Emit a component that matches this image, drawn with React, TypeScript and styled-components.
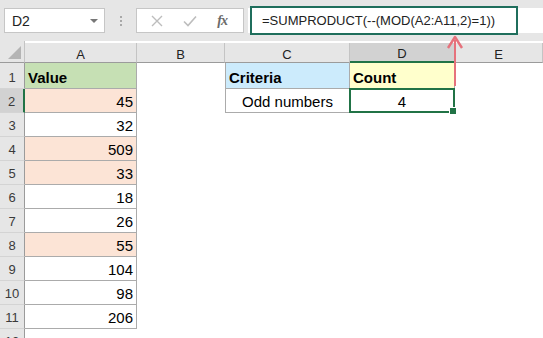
import React from 'react';
import styled, { createGlobalStyle, css } from 'styled-components';

const GlobalStyle = createGlobalStyle`
  html, body {
    margin: 0;
    padding: 0;
    background: #ffffff;
    font-family: 'Liberation Sans', Arial, sans-serif;
  }
`;

const GREEN = '#217346';
const TEAL = '#1f6e5c';
const GRID = '#ababab';
const HEADER_BG = '#e6e6e6';
const HEADER_SEL = '#d2d2d2';

const columns = ['A', 'B', 'C', 'D', 'E'];
const values = [45, 32, 509, 33, 18, 26, 55, 104, 98, 206];

const Page = styled.div`
  position: relative;
  width: 543px;
  height: 338px;
  overflow: hidden;
`;

const FormulaBar = styled.div`
  display: flex;
  align-items: center;
  height: 41px;
  padding-left: 4px;
  background: ${HEADER_BG};
  box-sizing: border-box;
`;

const NameBox = styled.div`
  display: flex;
  align-items: center;
  justify-content: space-between;
  width: 101px;
  height: 25px;
  box-sizing: border-box;
  padding: 0 6px 0 7px;
  background: #fff;
  border: 1px solid #c6c6c6;
  font-size: 14px;
  color: #222;
`;

const Caret = styled.span`
  width: 0;
  height: 0;
  border-left: 4px solid transparent;
  border-right: 4px solid transparent;
  border-top: 4px solid #777;
`;

const Grip = styled.div`
  display: flex;
  flex-direction: column;
  gap: 2px;
  width: 31px;
  align-items: center;
  span {
    width: 2px;
    height: 2px;
    background: #a8a8a8;
  }
`;

const FnButtons = styled.div`
  display: flex;
  align-items: center;
  justify-content: space-around;
  width: 108px;
  height: 25px;
  box-sizing: border-box;
  padding: 0 6px 0 4px;
  background: #fff;
  border: 1px solid #c6c6c6;
`;

const Fx = styled.span`
  font-family: 'Liberation Serif', 'Times New Roman', serif;
  font-style: italic;
  font-weight: bold;
  font-size: 14px;
  color: #6b6b6b;
  letter-spacing: -1px;
`;

const FormulaArea = styled.div`
  flex: 1;
  display: flex;
  align-items: center;
  height: 25px;
  margin-left: 4px;
  background: #fff;
`;

const FormulaBox = styled.div`
  display: flex;
  align-items: center;
  width: 268px;
  height: 29px;
  box-sizing: border-box;
  margin-left: 2px;
  padding-left: 10px;
  border: 2px solid ${TEAL};
  font-size: 13px;
  color: #222;
  white-space: nowrap;
`;

const Sheet = styled.div`
  display: grid;
  grid-template-columns: 25px 112px 88px 125px 105px 1fr;
  grid-template-rows: 22px 26px repeat(11, 24px);
`;

const Corner = styled.div`
  position: relative;
  background: ${HEADER_BG};
  border-right: 1px solid #c4c4c4;
  border-bottom: 1px solid #9b9b9b;
  &::after {
    content: '';
    position: absolute;
    right: 3px;
    bottom: 3px;
    width: 0;
    height: 0;
    border-left: 13px solid transparent;
    border-bottom: 13px solid #b4b4b4;
  }
`;

const ColHead = styled.div<{ $selected?: boolean }>`
  display: flex;
  align-items: center;
  justify-content: center;
  margin-top: 2px;
  padding-top: 3px;
  box-sizing: border-box;
  font-size: 13px;
  color: #222;
  background: ${p => (p.$selected ? HEADER_SEL : HEADER_BG)};
  border-right: 1px solid #c4c4c4;
  border-bottom: ${p => (p.$selected ? `2px solid ${GREEN}` : '1px solid #9b9b9b')};
`;

const RowHead = styled.div<{ $selected?: boolean }>`
  display: flex;
  align-items: flex-end;
  justify-content: center;
  padding-bottom: 3px;
  box-sizing: border-box;
  font-size: 13px;
  color: #3a3a3a;
  background: ${p => (p.$selected ? HEADER_SEL : HEADER_BG)};
  border-bottom: 1px solid #d4d4d4;
  border-right: ${p => (p.$selected ? `2px solid ${GREEN}` : '1px solid #9b9b9b')};
`;

type Align = 'left' | 'right' | 'center';

const Cell = styled.div<{
  $fill?: string;
  $align?: Align;
  $bold?: boolean;
  $boxed?: boolean;
  $leftEdge?: boolean;
  $active?: boolean;
}>`
  position: relative;
  display: flex;
  align-items: flex-end;
  justify-content: ${p =>
    p.$align === 'right' ? 'flex-end' : p.$align === 'center' ? 'center' : 'flex-start'};
  padding: 0 3px 2px 3px;
  box-sizing: border-box;
  font-size: 15px;
  color: #000;
  font-weight: ${p => (p.$bold ? 'bold' : 'normal')};
  background: ${p => p.$fill ?? '#fff'};
  white-space: nowrap;
  ${p =>
    p.$boxed &&
    css`
      border-right: 1px solid ${GRID};
      border-bottom: 1px solid ${GRID};
    `}
  ${p =>
    p.$leftEdge &&
    css`
      border-left: 1px solid ${GRID};
    `}
  ${p =>
    p.$active &&
    css`
      &::after {
        content: '';
        position: absolute;
        left: -1px;
        top: -1px;
        right: -1px;
        bottom: -1px;
        border: 2px solid ${GREEN};
      }
      &::before {
        content: '';
        position: absolute;
        right: -3px;
        bottom: -3px;
        width: 6px;
        height: 6px;
        background: ${GREEN};
        border: 1px solid #fff;
        z-index: 2;
      }
    `}
`;

const Arrow = styled.svg`
  position: absolute;
  left: 446px;
  top: 34px;
`;

const CrossIcon = () => (
  <svg width="12" height="12" viewBox="0 0 12 12">
    <path d="M1 1 L11 11 M11 1 L1 11" stroke="#bdbdbd" strokeWidth="1.4" fill="none" />
  </svg>
);

const CheckIcon = () => (
  <svg width="14" height="12" viewBox="0 0 14 12">
    <path d="M1 6.5 L5 10.5 L13 1.5" stroke="#bdbdbd" strokeWidth="1.6" fill="none" />
  </svg>
);

const App: React.FC = () => {
  const rows = [
    {
      head: '1',
      a: <Cell $boxed $fill="#c6e0b4" $bold>Value</Cell>,
      c: <Cell $boxed $leftEdge $fill="#ccebfc" $bold>Criteria</Cell>,
      d: <Cell $boxed $fill="#ffffcc" $bold>Count</Cell>,
    },
    ...values.map((v, i) => ({
      head: String(i + 2),
      a: (
        <Cell $boxed $align="right" $fill={v % 2 === 1 ? '#fce4d6' : '#fff'}>
          {v}
        </Cell>
      ),
      c:
        i === 0 ? (
          <Cell $boxed $leftEdge $align="center">Odd numbers</Cell>
        ) : (
          <Cell />
        ),
      d:
        i === 0 ? (
          <Cell $boxed $active $align="center">4</Cell>
        ) : (
          <Cell />
        ),
    })),
    { head: '12', a: <Cell />, c: <Cell />, d: <Cell /> },
  ];

  return (
    <Page>
      <GlobalStyle />
      <FormulaBar>
        <NameBox>
          D2
          <Caret />
        </NameBox>
        <Grip>
          <span />
          <span />
          <span />
        </Grip>
        <FnButtons>
          <CrossIcon />
          <CheckIcon />
          <Fx>fx</Fx>
        </FnButtons>
        <FormulaArea>
          <FormulaBox>=SUMPRODUCT(--(MOD(A2:A11,2)=1))</FormulaBox>
        </FormulaArea>
      </FormulaBar>
      <Sheet>
        <Corner />
        {columns.map(c => (
          <ColHead key={c} $selected={c === 'D'}>
            {c}
          </ColHead>
        ))}
        {rows.map(r => (
          <React.Fragment key={r.head}>
            <RowHead $selected={r.head === '2'}>{r.head}</RowHead>
            {r.a}
            <Cell />
            {r.c}
            {r.d}
            <Cell />
          </React.Fragment>
        ))}
      </Sheet>
      <Arrow width="18" height="54" viewBox="0 0 18 54">
        <path d="M9 6 L9 52" stroke="#e6727c" strokeWidth="2" fill="none" />
        <path d="M2 14 L9 3 L16 14" stroke="#e6727c" strokeWidth="2.4" fill="none" strokeLinejoin="round" />
      </Arrow>
    </Page>
  );
};

export default App;
